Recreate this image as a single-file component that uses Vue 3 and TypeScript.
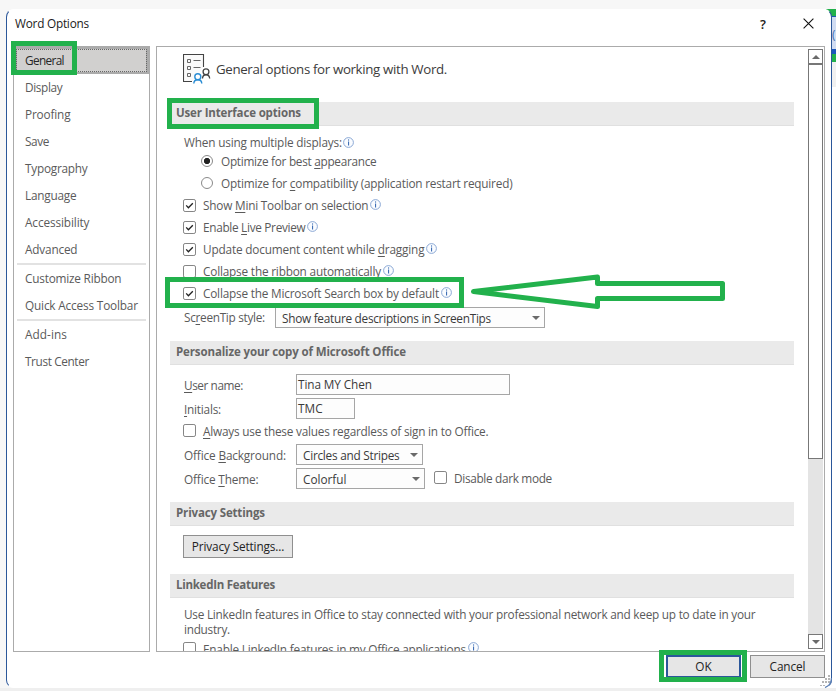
<script setup lang="ts">
import { h, type FunctionalComponent } from 'vue'

interface NavItem {
  text: string
  width: number
  ruled?: boolean
}
interface Option {
  text: string
  width: number
  checked?: boolean
}

const nav: NavItem[] = [
  { text: 'General', width: 39.5 },
  { text: 'Display', width: 38 },
  { text: 'Proofing', width: 46 },
  { text: 'Save', width: 24.5 },
  { text: 'Typography', width: 63 },
  { text: 'Language', width: 52 },
  { text: 'Accessibility', width: 65 },
  { text: 'Advanced', width: 53 },
  { text: 'Customize Ribbon', width: 97, ruled: true },
  { text: 'Quick Access Toolbar', width: 113.5 },
  { text: 'Add-ins', width: 42.5, ruled: true },
  { text: 'Trust Center', width: 64.5 },
]

const options: Option[] = [
  { text: 'Show _Mini Toolbar on selection', width: 166, checked: true },
  { text: 'Enable _Live Preview', width: 103, checked: true },
  { text: 'Update document content while _dragging', width: 222, checked: true },
  { text: 'Collapse the ribbon automatically', width: 178.5 },
  { text: 'Collapse the Microsoft Search box by default', width: 236.5, checked: true },
]

// Tracks each label so that it takes up the given advance width.
const fit = (el: HTMLElement, width: number) => {
  const n = (el.textContent ?? '').length
  el.style.letterSpacing = `${(width - 0.6 - el.getBoundingClientRect().width) / n}px`
}

// Label text; an underscore marks the access key that follows it.
const Txt: FunctionalComponent<{ t: string; w: number }> = (props) => {
  const at = props.t.indexOf('_')
  const body =
    at < 0
      ? [props.t]
      : [props.t.slice(0, at), h('u', props.t[at + 1]), props.t.slice(at + 2)]
  return h(
    'span',
    { class: 'txt', onVnodeMounted: (v: any) => fit(v.el as HTMLElement, props.w) },
    body,
  )
}
Txt.props = ['t', 'w']

const svg = (cls: string, size: number, kids: any[]) =>
  h('svg', { class: cls, width: size, height: size, viewBox: `0 0 ${size} ${size}` }, kids)

const Info: FunctionalComponent = () =>
  svg('info', 11, [
    h('circle', { cx: 5.5, cy: 5.5, r: 4.9, fill: '#fafcff', stroke: '#7f9fd0', 'stroke-width': 0.9 }),
    h('rect', { x: 5, y: 2.4, width: 1.1, height: 1.2, fill: '#3f6fb5' }),
    h('rect', { x: 5, y: 4.5, width: 1.1, height: 4, fill: '#3f6fb5' }),
  ])

const Check: FunctionalComponent<{ on?: boolean }> = (props) =>
  svg('check', 13, [
    h('rect', { x: 0.5, y: 0.5, width: 12, height: 12, rx: 1.6, fill: '#fff', stroke: '#858585' }),
    props.on
      ? h('path', { d: 'M3.2 6.4 5.4 8.7 9.8 4.2', fill: 'none', stroke: '#222', 'stroke-width': 1.3 })
      : null,
  ])
Check.props = { on: Boolean }
</script>

<template>
  <div class="desktop">
    <div class="behind">
      <i class="g1"></i><i class="lb">(</i><i class="bl"></i><i class="g2"></i><i class="gy"></i>
    </div>
    <div class="dialog">
      <header class="titlebar">
        <Txt t="Word Options" :w="74.5" />
        <span class="help">?</span>
        <svg class="close" width="11" height="11" viewBox="0 0 11 11">
          <path d="M.6.6 10.4 10.4M10.4.6.6 10.4" stroke="#111" stroke-width="1.1" />
        </svg>
      </header>

      <main class="body">
        <nav class="side">
          <div
            v-for="(item, i) in nav"
            :key="item.text"
            class="nav-item"
            :class="{ active: i === 0, ruled: item.ruled }"
          >
            <Txt :t="item.text" :w="item.width" />
          </div>
        </nav>

        <section class="panel">
          <div class="content">
            <div class="heading">
              <svg width="28" height="31" viewBox="0 0 28 31" fill="none">
                <path d="M9 27.5H.5V.5H20.5V13" fill="#fafafa" stroke="#444" stroke-width="1.1" />
                <path d="M4.5 5.500h3v3h-3zM4.5 12.5h3v3h-3zM4.5 19.5h3v3h-3z" stroke="#666" />
                <path d="M10.5 6.500h7M10.5 13.5h7" stroke="#666" />
                <circle cx="23" cy="17.8" r="2.9" stroke="#444" stroke-width="1.3" />
                <path d="M19.5 24.5c.3-5 6.700-5 7.200 0" stroke="#444" stroke-width="1.3" />
                <circle cx="14.8" cy="22.8" r="3" fill="#fff" stroke="#2a8dd4" stroke-width="1.4" />
                <path d="M10.8 29.500c.3-5 7.700-5 8 0" stroke="#2a8dd4" stroke-width="1.4" />
              </svg>
              <Txt t="General options for working with Word." :w="231.5" />
            </div>

            <h2><Txt t="User Interface options" :w="125.5" /></h2>
            <div class="row lead"><Txt t="When using multiple displays:" :w="158.5" /><Info /></div>
            <div class="row radio-row">
              <span class="radio on"></span><Txt t="Optimize for best _appearance" :w="156" />
            </div>
            <div class="row radio-row">
              <span class="radio"></span><Txt t="Optimize for _compatibility (application restart required)" :w="292" />
            </div>
            <div v-for="o in options" :key="o.text" class="row">
              <Check :on="o.checked" /><Txt :t="o.text" :w="o.width" /><Info />
            </div>
            <div class="field tip">
              <label><Txt t="Sc_reenTip style:" :w="81.5" /></label>
              <span class="combo"><Txt t="Show feature descriptions in ScreenTips" :w="209.5" /></span>
            </div>

            <h2><Txt t="Personalize your copy of Microsoft Office" :w="230.5" /></h2>
            <div class="field first">
              <label><Txt t="_User name:" :w="59.5" /></label>
              <span class="input name"><Txt t="Tina MY Chen" :w="74.5" /></span>
            </div>
            <div class="field">
              <label><Txt t="_Initials:" :w="37.5" /></label>
              <span class="input initials"><Txt t="TMC" :w="25.5" /></span>
            </div>
            <div class="row always">
              <Check /><Txt t="_Always use these values regardless of sign in to Office." :w="286" />
            </div>
            <div class="field flush">
              <label><Txt t="Office _Background:" :w="102.5" /></label>
              <span class="combo bg"><Txt t="Circles and Stripes" :w="97" /></span>
            </div>
            <div class="field">
              <label><Txt t="Office _Theme:" :w="75" /></label>
              <span class="combo theme"><Txt t="Colorful" :w="44" /></span>
              <Check class="dark" /><Txt t="Disable dark mode" :w="98.5" />
            </div>

            <h2><Txt t="Privacy Settings" :w="89.5" /></h2>
            <button class="btn privacy"><Txt t="Privacy Settings..." :w="93" /></button>

            <h2 class="linkedin"><Txt t="LinkedIn Features" :w="99.5" /></h2>
            <p>
              <Txt t="Use LinkedIn features in Office to stay connected with your professional network and keep up to date in your" :w="572" />
              <Txt t="industry." :w="46.5" />
            </p>
            <div class="row last">
              <Check /><Txt t="Enable LinkedIn features in my Office applications" :w="263.5" /><Info />
            </div>
          </div>

          <div class="scroll">
            <span class="arrow-btn up"></span>
            <span class="thumb"></span>
            <span class="arrow-btn down"></span>
          </div>
        </section>
      </main>

      <footer>
        <button class="btn ok"><Txt t="OK" :w="17" /></button>
        <button class="btn cancel"><Txt t="Cancel" :w="36.5" /></button>
      </footer>
      <svg class="grip" width="12" height="13" viewBox="0 0 12 13" fill="#b5b5b5">
        <path d="M8 0h2v2H8zM5 3h2v2H5zM8 3h2v2H8zM2 6h2v2H2zM5 6h2v2H5zM8 6h2v2H8zM0 10h2v1H0zM3 10h2v1H3z" />
        <path d="M11.5 3C11.5 8 9 11 5 12.5" fill="none" stroke="#5b7fb5" stroke-width="1.3" />
      </svg>
    </div>

    <div class="mark general"></div>
    <div class="mark ui"></div>
    <div class="mark search"></div>
    <div class="mark okay"></div>
    <svg class="pointer" width="260" height="40" viewBox="0 0 260 40">
      <path
        d="M5.5 21.5 129.5 7V13.5H254.5V28.5H129.5V36.5Z"
        fill="none" stroke="#22b14c" stroke-width="5" stroke-linejoin="round"
      />
    </svg>
  </div>
</template>

<style>
body {
  background: #f7f7f7;
  overflow: hidden;
}
.txt {
  display: inline-block;
  white-space: pre;
  flex: none;
}
.txt u {
  text-decoration-thickness: 1px;
  text-underline-offset: 2px;
}
.info,
.check {
  flex: none;
  display: block;
}
</style>

<style scoped>
.desktop {
  position: relative;
  box-sizing: border-box;
  width: 836px;
  height: 691px;
  padding: 9px 0 3px 6px;
  background: linear-gradient(#f7f7f7 688px, #efefef 688px);
  font: 11.8px/16px 'Open Sans', 'Noto Sans', sans-serif;
  color: #5a5a5a;
}
.dialog {
  position: relative;
  box-sizing: border-box;
  width: 826px;
  height: 679px;
  background: #fff;
  border: 1px solid #2b579a;
  border-top-color: #fff;
  border-bottom-color: #fff;
  border-radius: 8px;
}
.behind {
  position: absolute;
  left: 826px;
  top: 9px;
  width: 10px;
  height: 679px;
  background: #fff;
  display: flex;
  flex-direction: column;
}
.behind i { display: block; }
.g1 { height: 7px; background: #22b14c; }
.lb {
  height: 33px;
  background: #d0dcf2;
  color: #4470b0;
  padding-left: 6px;
  line-height: 34px;
  font-style: normal;
  box-sizing: border-box;
  border-top: 1px solid #1b55b5;
}
.bl { height: 5px; background: #1d58bd; }
.g2 { height: 8px; background: #22b14c; }
.gy { height: 25px; background: #f0f0f0; }

.titlebar {
  display: flex;
  align-items: center;
  height: 27px;
  padding: 0 17px 0 8px;
  color: #1a1a1a;
}
.titlebar .txt { padding-bottom: 2px; }
.help {
  margin-left: auto;
  margin-right: 37px;
  font: 600 13px/16px 'Open Sans', sans-serif;
}
.close { display: block; }
.body {
  display: flex;
  gap: 6px;
  margin: 9px 0 0 6px;
}
.side,
.panel {
  box-sizing: border-box;
  height: 606px;
  border: 1px solid #ababab;
}
.side { width: 137px; }
.nav-item {
  display: flex;
  align-items: center;
  height: 27px;
  padding-left: 11px;
}
.nav-item .txt { padding-bottom: 2px; }
.nav-item.active {
  box-sizing: border-box;
  padding-left: 8px;
  background: #d1d0cf;
  border: solid #ababab;
  border-width: 2px 3px 2px 3px;
  outline: 1px dotted #666;
  outline-offset: -3px;
  color: #262626;
}
.nav-item.ruled {
  border-top: 2px solid #e2e2e2;
  margin: 0 3px;
  padding-left: 8px;
}
.panel {
  display: flex;
  width: 669px;
  padding-right: 1px;
}
.content {
  flex: 1;
  overflow: hidden;
  padding-left: 13px;
}
.heading {
  display: flex;
  align-items: center;
  gap: 5px;
  height: 55px;
  padding: 0 0 10px 13px;
  box-sizing: border-box;
  font-size: 13.3px;
  color: #3c3c3c;
}
.heading .txt { padding-bottom: 2px; }
h2 {
  display: flex;
  align-items: center;
  box-sizing: border-box;
  width: 624px;
  height: 24px;
  margin: 13px 0 0;
  padding: 0 0 1px 6px;
  border-bottom: 1px solid #e0e0e0;
  background: #eaeaea;
  color: #666;
  font-size: 11.5px;
  font-weight: 700;
}
.heading + h2 { margin-top: 0; }
.row {
  position: relative;
  top: -1px;
  display: flex;
  align-items: center;
  height: 22px;
  padding-left: 13px;
}
.row .check { margin-right: 7px; }
.row .info { position: relative; top: -1px; margin-left: 2px; }
.row.lead { top: 0; height: 18px; margin-top: 7px; padding-left: 14px; }
.row.lead .info { top: 0; margin-left: 1px; }
.radio-row { padding-left: 31px; }
.radio {
  box-sizing: border-box;
  width: 12px;
  height: 12px;
  margin-right: 8px;
  border: 1px solid #8a8a8a;
  border-radius: 50%;
  background: #fff;
}
.radio.on { background: radial-gradient(circle, #222 0 2.8px, #fff 3.4px); }
.field {
  display: flex;
  align-items: center;
  height: 21px;
  margin-top: 3px;
  padding-left: 14px;
}
.field label {
  display: flex;
  flex: none;
  width: 112px;
}
.field.tip { margin-top: 2px; }
.field.tip label { width: 91px; padding-bottom: 1px; }
.field.first { margin-top: 9px; }
.field.flush { margin-top: 0; }
.combo,
.input {
  display: flex;
  align-items: center;
  box-sizing: border-box;
  height: 21px;
  border: 1px solid #a6a6a6;
  background: #fdfdfd;
  color: #3a3a3a;
}
.input { padding: 0 0 2px 1px; }
.name { width: 214px; }
.initials { width: 59px; }
.combo {
  justify-content: space-between;
  width: 270px;
  padding: 0 4px 0 6px;
}
.combo::after,
.arrow-btn::after {
  content: '';
  border: 4px solid transparent;
  border-top: 4px solid #6a6a6a;
  border-bottom: 0;
}
.bg { width: 127px; }
.theme { width: 129px; }
.dark { margin: 0 7px 0 9px; position: relative; top: -1px; }
.dark + .txt { position: relative; top: -1px; }
.row.always { height: 25px; }
.btn {
  display: flex;
  align-items: center;
  justify-content: center;
  box-sizing: border-box;
  height: 23px;
  padding: 0 0 1px;
  border: 1px solid #8f8f8f;
  background: #e6e6e6;
  color: #222;
  font: inherit;
}
.privacy { width: 110px; margin: 9px 0 0 13px; }
h2.linkedin { margin-top: 16px; }
p {
  display: flex;
  flex-direction: column;
  align-items: flex-start;
  margin: 9px 0 0 14px;
  line-height: 15px;
}
.row.last { top: 0; height: 21px; margin-top: 1px; }
.scroll {
  display: flex;
  flex-direction: column;
  width: 15px;
  height: 600px;
  margin-top: 2px;
  background: #e4e4e4;
}
.arrow-btn {
  display: flex;
  align-items: center;
  justify-content: center;
  box-sizing: border-box;
  height: 15px;
  border: 1px solid #777;
  background: #fff;
}
.up::after { transform: rotate(180deg); }
.thumb {
  box-sizing: border-box;
  height: 395px;
  border: 1px solid #777;
  background: #fff;
}
.down { margin-top: auto; }
footer {
  display: flex;
  justify-content: flex-end;
  gap: 9px;
  margin: 3px 6px 0 0;
}
.ok { width: 75px; border: 2px solid #2b579a; }
.cancel { width: 75px; }
.grip { position: absolute; right: -1px; bottom: -1px; }

.mark { position: absolute; box-sizing: border-box; border: 5px solid #22b14c; }
.general { left: 11px; top: 41px; width: 66px; height: 34px; }
.ui { left: 167px; top: 98px; width: 152px; height: 31px; }
.search { left: 165px; top: 277px; width: 299px; height: 31px; }
.okay { left: 659px; top: 650px; width: 88px; height: 32px; }
.pointer { position: absolute; left: 468px; top: 270px; }
</style>
